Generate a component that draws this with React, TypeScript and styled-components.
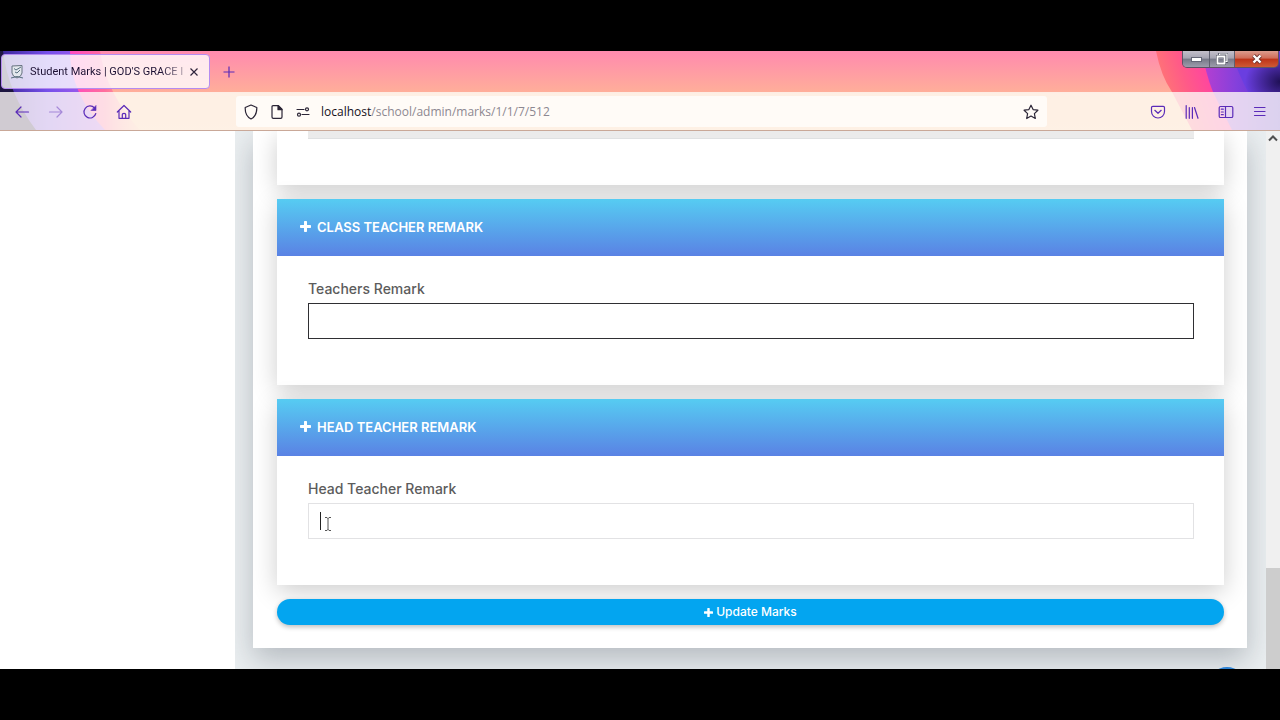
import React from 'react';
import styled, { createGlobalStyle } from 'styled-components';

const GlobalStyle = createGlobalStyle`
  *, *::before, *::after { box-sizing: border-box; }
  body { margin: 0; background: #000; }
  button, input { font: inherit; margin: 0; }
`;

const pageFont = `Inter, 'Open Sans', sans-serif`;

const Screen = styled.div`
  display: flex;
  flex-direction: column;
  min-height: 100vh;
  padding: 51px 0;
  background: #000;
`;

const BrowserWindow = styled.div`
  flex: 1;
  display: flex;
  flex-direction: column;
  background: #fff;
`;

const Chrome = styled.header`
  position: relative;
  background: linear-gradient(#ff8aae, #ffae9a 41px, #ffc99a 42px, #ffcf9e);
  border-bottom: 1px solid #c9a898;
`;

const ThemeArt = styled.svg<{ $side: 'left' | 'right' }>`
  position: absolute;
  top: 0;
  ${(p) => p.$side}: 0;
`;

const TabStrip = styled.div`
  position: relative;
  display: flex;
  align-items: flex-start;
  height: 41px;
  padding: 3px 1px 0;
`;

const Tab = styled.div`
  display: flex;
  align-items: center;
  justify-content: space-between;
  width: 209px;
  height: 35px;
  padding: 1px 11px 0 8px;
  border: 1px solid #b58cf0;
  border-radius: 4px;
  background: rgba(255, 255, 255, 0.8);
`;

const Favicon = styled.svg`
  flex: none;
`;

const TabTitle = styled.span`
  flex: 1;
  margin-left: 6px;
  white-space: nowrap;
  font-family: Roboto, 'Open Sans', sans-serif;
  font-size: 11px;
  line-height: 18px;
  color: #1d1133;
  mask-image: linear-gradient(to right, #000 130px, transparent 166px);
`;

const IconButton = styled.button<{ $width: number; $faded?: boolean }>`
  display: flex;
  align-items: center;
  justify-content: center;
  width: ${(p) => p.$width}px;
  height: 36px;
  padding: 0;
  border: 0;
  background: none;
  color: #5a2bb8;
  opacity: ${(p) => (p.$faded ? 0.45 : 1)};
`;

const CloseTabButton = styled.button`
  display: flex;
  flex: none;
  width: 8px;
  height: 8px;
  padding: 0;
  border: 0;
  background: none;
`;

const WindowControls = styled.div`
  display: flex;
  margin: -3px 0 0 auto;
  height: 17px;
  border: 1px solid #5f5266;
  border-top: 0;
  border-radius: 0 0 5px 5px;
  overflow: hidden;
`;

const WindowButton = styled.button<{ $width: number; $close?: boolean }>`
  display: flex;
  align-items: center;
  justify-content: center;
  width: ${(p) => p.$width}px;
  padding: 0;
  border: 0;
  border-right: ${(p) => (p.$close ? '0' : '1px solid #5f6070')};
  background: ${(p) =>
    p.$close
      ? 'linear-gradient(#dc9c8e, #cf6c58 45%, #bd3318 50%, #cf5a34)'
      : 'linear-gradient(#c3bfca, #a5a4b2 45%, #777988 50%, #9c9dac)'};
`;

const Toolbar = styled.div`
  position: relative;
  display: flex;
  align-items: center;
  height: 38px;
  padding: 1px 3px 0 5px;
  background: rgba(254, 249, 246, 0.8);
`;

const AddressBar = styled.div`
  flex: 1;
  display: flex;
  align-items: center;
  height: 31px;
  margin: 0 94px 0 95px;
  padding: 0 8px 0 7px;
  gap: 10px;
  border-radius: 3px;
  background: rgba(255, 255, 255, 0.7);
  color: #2b2536;
`;

const Address = styled.div`
  flex: 1;
  font-family: 'Open Sans', 'Noto Sans', sans-serif;
  font-size: 12px;
  line-height: 20px;
  color: #8d8891;
  white-space: nowrap;
`;

const Host = styled.span`
  color: #15111c;
`;

const Viewport = styled.div`
  position: relative;
  flex: 1;
  display: flex;
  overflow: hidden;
`;

const Sidebar = styled.aside`
  position: relative;
  width: 235px;
  flex: none;
  background: #fff;
`;

const Main = styled.main`
  flex: 1;
  min-width: 0;
  padding: 0 19px 20px 18px;
  background: #ebeff1;
  font-family: ${pageFont};
`;

const Panel = styled.form`
  display: flex;
  flex-direction: column;
  gap: 14px;
  padding: 0 23px 23px 24px;
  background: #fff;
  box-shadow: 0 12px 28px rgba(55, 65, 80, 0.3);
`;

const Card = styled.section`
  background: #fff;
  box-shadow: 0 6px 24px rgba(0, 0, 0, 0.2);
`;

const CardHeader = styled.h2`
  display: flex;
  align-items: center;
  gap: 6px;
  height: 57px;
  margin: 0;
  padding: 0 23px 2px;
  background: linear-gradient(#56ccf2, #5a82e4);
  color: #fff;
  font-size: 13px;
  font-weight: 600;
  line-height: 20px;
`;

const CardBody = styled.div<{ $continued?: boolean }>`
  padding: ${(p) => (p.$continued ? '0' : '23px')} 30px 46px 31px;
`;

const Label = styled.label`
  display: block;
  margin-bottom: 4px;
  font-size: 14px;
  font-weight: 500;
  line-height: 20px;
  color: #5c5c5c;
`;

const Field = styled.div`
  position: relative;
`;

const TextInput = styled.input<{ $active?: boolean }>`
  display: block;
  width: 100%;
  height: 36px;
  padding: 0 12px;
  border: 1px solid ${(p) => (p.$active ? '#2f2f33' : '#e2e2e4')};
  border-radius: 0;
  background: #fff;
  font-size: 13px;
  outline: 0;
`;

const LockedInput = styled.input`
  display: block;
  width: 100%;
  height: 8px;
  padding: 0;
  border: 0;
  border-bottom: 1px solid #dfe1e2;
  background: #ebebeb;
`;

const Caret = styled.svg`
  position: absolute;
  left: 12px;
  top: 9px;
`;

const SubmitButton = styled.button`
  display: flex;
  align-items: center;
  justify-content: center;
  gap: 3px;
  height: 26px;
  padding: 0;
  border: 0;
  border-radius: 13px;
  background: #03a5f0;
  box-shadow: 0 2px 5px rgba(0, 0, 0, 0.26);
  color: #fff;
  font-size: 12px;
  font-weight: 500;
  line-height: 18px;
`;

const BackToTop = styled.button`
  position: absolute;
  right: 34px;
  bottom: -36px;
  width: 38px;
  height: 38px;
  padding: 0;
  border: 0;
  border-radius: 50%;
  background: #2d82d4;
`;

const ScrollTrack = styled.div`
  position: relative;
  display: flex;
  flex-direction: column;
  align-items: center;
  justify-content: space-between;
  flex: none;
  width: 14px;
  padding-top: 4px;
  background: #f0f0f0;
`;

const ScrollThumb = styled.div`
  width: 100%;
  height: 101px;
  background: #cdcdcd;
`;

type StrokeProps = { size?: number; children: React.ReactNode };

const Stroke = ({ size = 16, children }: StrokeProps) => (
  <svg
    width={size}
    height={size}
    viewBox="0 0 16 16"
    fill="none"
    stroke="currentColor"
    strokeWidth="1.2"
    strokeLinecap="round"
    strokeLinejoin="round"
    aria-hidden="true"
  >
    {children}
  </svg>
);

const Plus = ({ size }: { size: number }) => (
  <svg width={size} height={size} viewBox="0 0 11 11" fill="currentColor" aria-hidden="true">
    <path d="M4.7 0h1.6q.7 0 .7.7V4h3.3q.7 0 .7.7v1.6q0 .7-.7.7H7v3.3q0 .7-.7.7H4.7q-.7 0-.7-.7V7H.7Q0 7 0 6.3V4.7Q0 4 .7 4H4V.7Q4 0 4.7 0z" />
  </svg>
);

const LeftArt = () => (
  <ThemeArt $side="left" width="190" height="79" aria-hidden="true">
    <defs>
      <linearGradient id="leftViolet" x1="0" x2="1">
        <stop offset="0" stopColor="#3a2597" />
        <stop offset="0.45" stopColor="#7650ea" />
        <stop offset="1" stopColor="#b060ec" />
      </linearGradient>
      <linearGradient id="leftRose" x1="0.5" x2="1">
        <stop offset="0" stopColor="#ff49c0" />
        <stop offset="0.5" stopColor="#ff6e9c" />
        <stop offset="1" stopColor="#ff9e90" stopOpacity="0.2" />
      </linearGradient>
    </defs>
    <path d="M0 0H100Q106 42 140 79H0z" fill="url(#leftRose)" />
    <path d="M0 0H70Q70 42 105 79H0z" fill="url(#leftViolet)" />
    <path d="M0 0H3Q8 42 36 79H0z" fill="#1d1540" />
  </ThemeArt>
);

const RightArt = () => (
  <ThemeArt $side="right" width="130" height="79" aria-hidden="true">
    <defs>
      <linearGradient id="rightRose" gradientUnits="userSpaceOnUse" x1="8" y1="40" x2="64" y2="20">
        <stop offset="0" stopColor="#ff7c70" />
        <stop offset="0.5" stopColor="#ff5a88" />
        <stop offset="1" stopColor="#ff3fa6" />
      </linearGradient>
      <linearGradient id="rightViolet" x1="0" x2="1">
        <stop offset="0" stopColor="#b83fd0" />
        <stop offset="0.45" stopColor="#8340dc" />
        <stop offset="1" stopColor="#5136ce" />
      </linearGradient>
      <radialGradient id="rightShade" cx="1" cy="0.75" r="0.7">
        <stop offset="0" stopColor="#1f1055" />
        <stop offset="1" stopColor="#6a3ee0" />
      </radialGradient>
    </defs>
    <path d="M6 0Q11 25 22 41L42 79H130V0z" fill="url(#rightRose)" />
    <path d="M52 0Q56 24 63 41L82 79H130V0z" fill="url(#rightViolet)" />
    <path d="M80 0Q90 26 98 41H130V0z" fill="url(#rightShade)" />
  </ThemeArt>
);

export default function App() {
  return (
    <>
      <GlobalStyle />
      <Screen>
        <BrowserWindow>
          <Chrome>
            <LeftArt />
            <RightArt />
            <TabStrip>
              <Tab>
                <Favicon width="14" height="16" viewBox="0 0 14 16" fill="none" aria-hidden="true">
                  <path d="M2 2L12 1.5V9Q11.5 12.5 7 14Q2.5 12.5 2 9z" fill="#e3e8ed" stroke="#65717e" />
                  <path d="M4 4.5L6 6L11 3M5 8L7 9L10 6M1 14Q7 11 13 14" stroke="#587080" />
                </Favicon>
                <TabTitle>Student Marks | GOD'S GRACE I</TabTitle>
                <CloseTabButton aria-label="Close tab">
                  <svg width="8" height="8" viewBox="0 0 8 8" stroke="#30253c" strokeWidth="1.2" aria-hidden="true">
                    <path d="M.5 .5l7 7M7.5 .5l-7 7" />
                  </svg>
                </CloseTabButton>
              </Tab>
              <IconButton $width={38} aria-label="New tab">
                <svg width="12" height="12" viewBox="0 0 12 12" stroke="currentColor" strokeWidth="1.2" aria-hidden="true">
                  <path d="M6 .5v11M.5 6h11" />
                </svg>
              </IconButton>
              <WindowControls>
                <WindowButton $width={27} aria-label="Minimize">
                  <svg width="11" height="5" aria-hidden="true">
                    <rect x="0.5" y="0.5" width="10" height="4" fill="#fff" stroke="#666878" />
                  </svg>
                </WindowButton>
                <WindowButton $width={25} aria-label="Restore">
                  <svg width="12" height="12" viewBox="0 0 12 12" fill="none" aria-hidden="true">
                    <path d="M3.5 2V1H11V8.5H9.5M1.5 3.5H8.5V10.5H1.5z" stroke="#555766" strokeWidth="3" />
                    <path d="M3.5 2V1H11V8.5H9.5" stroke="#fff" strokeWidth="1.2" />
                    <path d="M1.5 3.5H8.5V10.5H1.5z" stroke="#fff" strokeWidth="1.8" />
                  </svg>
                </WindowButton>
                <WindowButton $width={43} $close aria-label="Close">
                  <svg width="12" height="10" viewBox="0 0 12 10" fill="none" aria-hidden="true">
                    <path d="M2.5 1.5L9.5 8.5M9.5 1.5L2.5 8.5" stroke="#6d3530" strokeWidth="4" />
                    <path d="M2.5 1.5L9.5 8.5M9.5 1.5L2.5 8.5" stroke="#fff" strokeWidth="2.4" />
                  </svg>
                </WindowButton>
              </WindowControls>
            </TabStrip>
            <Toolbar>
              <IconButton $width={34} aria-label="Back">
                <Stroke><path d="M14.5 8H2M7 3L2 8l5 5" /></Stroke>
              </IconButton>
              <IconButton $width={34} $faded aria-label="Forward">
                <Stroke><path d="M1.5 8H14M9 3l5 5-5 5" /></Stroke>
              </IconButton>
              <IconButton $width={34} aria-label="Reload">
                <Stroke>
                  <path d="M13.8 9.5A6 6 0 1 1 12.5 4" />
                  <path d="M14 1.8V6.5H9.3z" fill="currentColor" strokeWidth="0.6" />
                </Stroke>
              </IconButton>
              <IconButton $width={34} aria-label="Home">
                <Stroke><path d="M1.3 8L8 1.5L14.7 8M3 6.8V14.3H13V6.8M6.3 14V10.5Q6.3 9.3 8 9.3T9.7 10.5V14" /></Stroke>
              </IconButton>
              <AddressBar>
                <Stroke><path d="M8 1L13.8 3.5C14 9 12 13 8 15C4 13 2 9 2.2 3.5z" /></Stroke>
                <Stroke>
                  <path d="M4 1.7H9.5L13 5.2V13Q13 14.3 11.7 14.3H4.3Q3 14.3 3 13V2.7Q3 1.7 4 1.7z" />
                  <path d="M9 2V5.7H13z" fill="currentColor" />
                </Stroke>
                <Stroke>
                  <path d="M2 5.5H9M7 10.5H14" />
                  <circle cx="12" cy="5.3" r="1.5" />
                  <circle cx="4" cy="10.7" r="1.5" />
                </Stroke>
                <Address><Host>localhost</Host>/school/admin/marks/1/1/7/512</Address>
                <Stroke><path d="M8 1.2L10.1 5.6L14.9 6.2L11.4 9.6L12.3 14.5L8 12.1L3.7 14.5L4.6 9.6L1.1 6.2L5.9 5.6z" /></Stroke>
              </AddressBar>
              <IconButton $width={34} aria-label="Save to Pocket">
                <Stroke><path d="M2.8 2.3H13.2Q14.5 2.3 14.5 3.6V7.5A6.5 6.5 0 0 1 1.5 7.5V3.6Q1.5 2.3 2.8 2.3zM4.8 6.3L8 9.3L11.2 6.3" /></Stroke>
              </IconButton>
              <IconButton $width={34} aria-label="Library">
                <Stroke><path d="M2.2 1.5V14.3M5.3 3.5V14.3M8.4 3.5V14.3M10.5 3.5L14 14.3" /></Stroke>
              </IconButton>
              <IconButton $width={34} aria-label="Sidebars">
                <Stroke><path d="M2.5 2.5H13.5Q14.8 2.5 14.8 3.8V12.2Q14.8 13.5 13.5 13.5H2.5Q1.2 13.5 1.2 12.2V3.8Q1.2 2.5 2.5 2.5zM7.5 2.5V13.5M3.3 5.2H5.3M3.3 8H5.3M3.3 10.7H5.3" /></Stroke>
              </IconButton>
              <IconButton $width={34} aria-label="Menu">
                <Stroke><path d="M2.5 3.5H13M2.5 7.5H13M2.5 11.5H13" /></Stroke>
              </IconButton>
            </Toolbar>
          </Chrome>

          <Viewport>
            <Sidebar />
            <Main>
              <Panel onSubmit={(e) => e.preventDefault()}>
                <Card>
                  <CardBody $continued>
                    <LockedInput disabled aria-label="Total" />
                  </CardBody>
                </Card>
                <Card>
                  <CardHeader><Plus size={11} />CLASS TEACHER REMARK</CardHeader>
                  <CardBody>
                    <Label htmlFor="teacher-remark">Teachers Remark</Label>
                    <TextInput id="teacher-remark" $active />
                  </CardBody>
                </Card>
                <Card>
                  <CardHeader><Plus size={11} />HEAD TEACHER REMARK</CardHeader>
                  <CardBody>
                    <Label htmlFor="head-remark">Head Teacher Remark</Label>
                    <Field>
                      <TextInput id="head-remark" />
                      <Caret width="13" height="20" viewBox="0 0 13 20" fill="none" aria-hidden="true">
                        <path d="M.5 0V18" stroke="#222" />
                        <path d="M5 5.5H7L8 6.5L9 5.5H11M8 6V18M5 18.5H7L8 17.5L9 18.5H11" stroke="#555" />
                      </Caret>
                    </Field>
                  </CardBody>
                </Card>
                <SubmitButton type="submit"><Plus size={9} />Update Marks</SubmitButton>
              </Panel>
            </Main>
            <BackToTop aria-label="Back to top" />
            <ScrollTrack>
              <svg width="10" height="7" viewBox="0 0 10 7" fill="none" stroke="#505050" strokeWidth="2" aria-hidden="true">
                <path d="M1 5.5L5 1.5L9 5.5" />
              </svg>
              <ScrollThumb />
            </ScrollTrack>
          </Viewport>
        </BrowserWindow>
      </Screen>
    </>
  );
}
